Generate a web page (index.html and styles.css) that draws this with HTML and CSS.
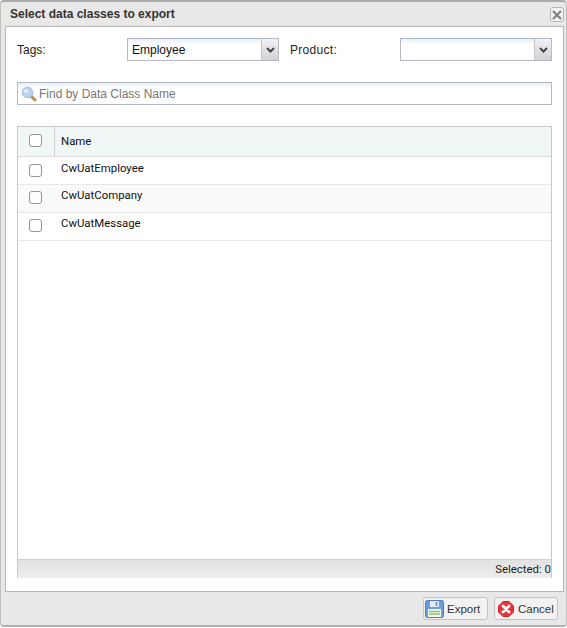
FILE: index.html
```html
<!DOCTYPE html>
<html lang="en">
<head>
    <meta charset="UTF-8">
    <title>Select data classes to export</title>
    <link rel="stylesheet" href="styles.css">
</head>
<body>
    <div class="dialog">
        <div class="titlebar">
            <span class="title">Select data classes to export</span>
            <span class="close">
                <svg width="10" height="10" viewBox="0 0 10 10"><path d="M1 1L9 9M9 1L1 9" stroke="#808080" stroke-width="2.2"/></svg>
            </span>
        </div>
        <div class="content">
            <div class="filters">
                <label class="tags-label">Tags:</label>
                <div class="combo tags-combo">
                    <span class="combo-value">Employee</span>
                    <span class="combo-arrow"><svg width="9" height="6" viewBox="0 0 9 6"><path d="M1 1L4.5 4.5L8 1" fill="none" stroke="#444" stroke-width="2"/></svg></span>
                </div>
                <label class="product-label">Product:</label>
                <div class="combo product-combo">
                    <span class="combo-value"></span>
                    <span class="combo-arrow"><svg width="9" height="6" viewBox="0 0 9 6"><path d="M1 1L4.5 4.5L8 1" fill="none" stroke="#444" stroke-width="2"/></svg></span>
                </div>
            </div>
            <div class="search">
                <svg class="search-icon" width="16" height="16" viewBox="0 0 16 16">
                    <path d="M10 10L14 14" stroke="#c08a4a" stroke-width="3" stroke-linecap="round"/>
                    <circle cx="6.5" cy="6.5" r="5.2" fill="#bcd6f0" stroke="#a3c2e0" stroke-width="1.2"/>
                    <circle cx="5" cy="5" r="2" fill="#e2eefa"/>
                </svg>
                <span class="search-text">Find by Data Class Name</span>
            </div>
            <div class="grid">
                <div class="grid-head">
                    <div class="check-cell head-check"><span class="check"></span></div>
                    <div class="name-cell">Name</div>
                </div>
                <div class="grid-body">
                    <div class="row">
                        <div class="check-cell"><span class="check"></span></div>
                        <div class="name-cell">CwUatEmployee</div>
                    </div>
                    <div class="row alt">
                        <div class="check-cell"><span class="check"></span></div>
                        <div class="name-cell">CwUatCompany</div>
                    </div>
                    <div class="row">
                        <div class="check-cell"><span class="check"></span></div>
                        <div class="name-cell">CwUatMessage</div>
                    </div>
                </div>
                <div class="grid-foot">Selected: 0</div>
            </div>
        </div>
        <div class="buttons">
            <button type="button" class="button export">
                <svg width="19" height="18" viewBox="0 0 19 18">
                    <rect x="0.5" y="0.5" width="18" height="17" rx="2" fill="#6c9dd8" stroke="#4a7cb8"/>
                    <rect x="5" y="1" width="9" height="6" fill="#e3ecf7"/>
                    <rect x="10.500" y="2" width="2" height="4" fill="#6c9dd8"/>
                    <rect x="3" y="9" width="13" height="8" fill="#f4f7ee"/>
                    <path d="M4 11.500H15M4 14H15" stroke="#8cc46a" stroke-width="1.500"/>
                </svg>
                Export
            </button>
            <button type="button" class="button cancel">
                <svg width="16" height="16" viewBox="0 0 16 16">
                    <path d="M5 0.500H11L15.500 5V11L11 15.500H5L0.500 11V5Z" fill="#e8343c" stroke="#d0262e" stroke-linejoin="round"/>
                    <path d="M5 5L11 11M11 5L5 11" stroke="#fff" stroke-width="2.800" stroke-linecap="round"/>
                </svg>
                Cancel
            </button>
        </div>
    </div>
</body>
</html>
```
FILE: styles.css
```css
html, body {
    margin: 0;
    padding: 0;
    background-color: #fff;
}
body {
    width: 567px;
    height: 628px;
    font-family: Tahoma, "Liberation Sans", Arial, sans-serif;
    font-size: 12px;
    color: #222;
    overflow: hidden;
}
.dialog {
    box-sizing: border-box;
    width: 567px;
    height: 627px;
    padding: 0 2px 0 4px;
    background-color: #e8e8e8;
    border-top: 2px solid #acacac;
    border-left: 1px solid #c0c0c0;
    border-right: 1px solid #c0c0c0;
    border-bottom: 2px solid #b0b0b0;
    border-radius: 4px;
    display: flex;
    flex-direction: column;
}
.titlebar {
    height: 24px;
    display: flex;
    align-items: center;
    justify-content: space-between;
    padding: 0 0 0 5px;
}
.title {
    font-weight: bold;
    color: #333;
}
.close {
    box-sizing: border-box;
    width: 14px;
    height: 15px;
    margin-top: 1px;
    border: 1px solid #b4b4b4;
    border-radius: 3px;
    background-color: #f4f4f4;
    display: flex;
    align-items: center;
    justify-content: center;
}
.content {
    box-sizing: border-box;
    height: 566px;
    padding: 11px 11px 13px 11px;
    background-color: #fff;
    border: 1px solid #bdb5b5;
    display: flex;
    flex-direction: column;
}
.filters {
    height: 23px;
    display: flex;
    align-items: center;
}
.tags-label {
    width: 110px;
}
.product-label {
    width: 110px;
    margin-left: 11px;
    letter-spacing: 0.3px;
}
.combo {
    box-sizing: border-box;
    width: 152px;
    height: 23px;
    border: 1px solid #b5b8c8;
    display: flex;
    background: linear-gradient(#e9eff2, #fff 6px);
}
.combo-value {
    flex: 1;
    padding-left: 4px;
    line-height: 22px;
    color: #111;
}
.combo-arrow {
    width: 16px;
    border-left: 1px solid #c4c4c4;
    background: linear-gradient(#f2f2f2, #d2d2d2);
    display: flex;
    align-items: center;
    justify-content: center;
}
.search {
    box-sizing: border-box;
    height: 23px;
    margin-top: 21px;
    padding-left: 3px;
    border: 1px solid #b5b8c8;
    background: linear-gradient(#e9eff2, #fff 6px);
    display: flex;
    align-items: center;
    gap: 2px;
}
.search-text {
    color: #777;
}
.grid {
    flex: 1;
    margin-top: 21px;
    border: 1px solid #c8c8c8;
    border-bottom: none;
    font-family: Roboto, "Liberation Sans", sans-serif;
    font-size: 11.4px;
    display: flex;
    flex-direction: column;
}
.grid-head {
    height: 29px;
    background-color: #f1f6f6;
    border-bottom: 1px solid #dcdcdc;
    display: flex;
}
.grid-body {
    flex: 1;
}
.row {
    height: 27px;
    border-bottom: 1px solid #e8e8e8;
    display: flex;
}
.alt {
    background-color: #fafafa;
}
.check-cell {
    box-sizing: border-box;
    width: 37px;
    padding: 6px 0 0 11px;
}
.row:first-child .check-cell {
    padding-top: 7px;
}
.head-check {
    padding-top: 7px;
    border-right: 1px solid #d0d0d0;
}
.check {
    display: block;
    box-sizing: border-box;
    width: 13px;
    height: 13px;
    border: 1px solid #949494;
    border-radius: 3px;
    background-color: #fff;
}
.name-cell {
    padding-left: 6px;
    line-height: 21px;
    color: #111;
}
.row:first-child .name-cell {
    line-height: 23px;
}
.grid-head .name-cell {
    line-height: 29px;
}
.grid-foot {
    height: 19px;
    box-sizing: border-box;
    border-top: 1px solid #cfcfcf;
    background: linear-gradient(#e2e2e2, #eeeeee);
    text-align: right;
    line-height: 19px;
    color: #222;
}
.buttons {
    flex: 1;
    display: flex;
    justify-content: flex-end;
    align-items: center;
    gap: 6px;
    padding-right: 6px;
}
.button {
    box-sizing: border-box;
    height: 23px;
    padding: 0 0 0 3px;
    border: 1px solid #c4c4c4;
    border-radius: 3px;
    background-color: #f2f2f2;
    font-family: inherit;
    font-size: 11.5px;
    color: #333;
    display: flex;
    align-items: center;
    gap: 4px;
}
.export {
    width: 65px;
    padding-left: 1px;
    gap: 3px;
}
.cancel {
    width: 64px;
}
```
